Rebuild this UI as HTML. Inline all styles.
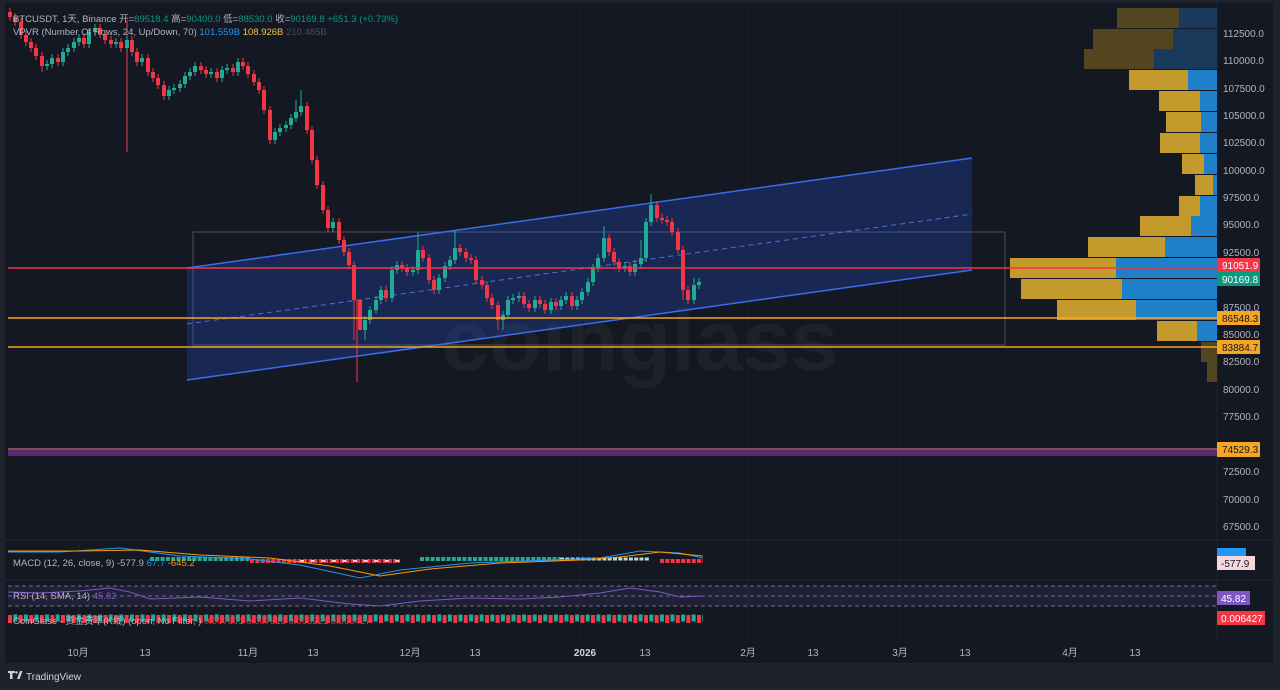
<!DOCTYPE html>
<html><head><meta charset="utf-8">
<style>
html,body{margin:0;padding:0;width:1280px;height:690px;overflow:hidden;background:#1e222d;font-family:"Liberation Sans","Noto Sans CJK SC",sans-serif}
#c{position:absolute;left:0;top:0}
</style></head><body>
<svg id="c" width="1280" height="690" xmlns="http://www.w3.org/2000/svg" font-family="Liberation Sans, Noto Sans CJK SC, sans-serif">
<rect x="0" y="0" width="1280" height="690" fill="#1e222d"/>
<rect x="5" y="3" width="1268" height="660" fill="#141823"/>
<g stroke="#1a1e2b" stroke-width="1">
<line x1="78" y1="3" x2="78" y2="640"/><line x1="248" y1="3" x2="248" y2="640"/><line x1="410" y1="3" x2="410" y2="640"/><line x1="580" y1="3" x2="580" y2="640"/><line x1="748" y1="3" x2="748" y2="640"/><line x1="900" y1="3" x2="900" y2="640"/><line x1="1070" y1="3" x2="1070" y2="640"/>
</g>
<line x1="5" y1="540" x2="1273" y2="540" stroke="#232734"/>
<line x1="5" y1="580" x2="1273" y2="580" stroke="#232734"/>
<line x1="1217" y1="3" x2="1217" y2="640" stroke="#1f2330"/>
<text x="640" y="370" text-anchor="middle" font-size="86" font-weight="bold" fill="#ffffff" fill-opacity="0.04">coinglass</text>
<rect x="193" y="232" width="812" height="113" fill="none" stroke="#4d505b" stroke-width="1"/>
<polygon points="187,268 972,158 972,270 187,380" fill="#2962ff" fill-opacity="0.22"/>
<line x1="187" y1="268" x2="972" y2="158" stroke="#3b6cf0" stroke-width="1.5"/>
<line x1="187" y1="380" x2="972" y2="270" stroke="#3b6cf0" stroke-width="1.5"/>
<line x1="187" y1="324" x2="972" y2="214" stroke="#4a72d8" stroke-width="1" stroke-dasharray="5,4"/>
<!-- volume profile -->
<g>
<rect x="1117" y="8" width="62" height="20" fill="#52451f"/><rect x="1179" y="8" width="38" height="20" fill="#1a3a5c"/>
<rect x="1093" y="29" width="80" height="20" fill="#52451f"/><rect x="1173" y="29" width="44" height="20" fill="#1a3a5c"/>
<rect x="1084" y="49" width="70" height="20" fill="#52451f"/><rect x="1154" y="49" width="63" height="20" fill="#1a3a5c"/>
<rect x="1129" y="70" width="59" height="20" fill="#c49a2c"/><rect x="1188" y="70" width="29" height="20" fill="#1e80c9"/>
<rect x="1159" y="91" width="41" height="20" fill="#c49a2c"/><rect x="1200" y="91" width="17" height="20" fill="#1e80c9"/>
<rect x="1166" y="112" width="35" height="20" fill="#c49a2c"/><rect x="1201" y="112" width="16" height="20" fill="#1e80c9"/>
<rect x="1160" y="133" width="40" height="20" fill="#c49a2c"/><rect x="1200" y="133" width="17" height="20" fill="#1e80c9"/>
<rect x="1182" y="154" width="22" height="20" fill="#c49a2c"/><rect x="1204" y="154" width="13" height="20" fill="#1e80c9"/>
<rect x="1195" y="175" width="18" height="20" fill="#c49a2c"/><rect x="1213" y="175" width="4" height="20" fill="#1e80c9"/>
<rect x="1179" y="196" width="21" height="20" fill="#c49a2c"/><rect x="1200" y="196" width="17" height="20" fill="#1e80c9"/>
<rect x="1140" y="216" width="51" height="20" fill="#c49a2c"/><rect x="1191" y="216" width="26" height="20" fill="#1e80c9"/>
<rect x="1088" y="237" width="77" height="20" fill="#c49a2c"/><rect x="1165" y="237" width="52" height="20" fill="#1e80c9"/>
<rect x="1010" y="258" width="106" height="20" fill="#c49a2c"/><rect x="1116" y="258" width="101" height="20" fill="#1e80c9"/>
<rect x="1021" y="279" width="101" height="20" fill="#c49a2c"/><rect x="1122" y="279" width="95" height="20" fill="#1e80c9"/>
<rect x="1057" y="300" width="79" height="20" fill="#c49a2c"/><rect x="1136" y="300" width="81" height="20" fill="#1e80c9"/>
<rect x="1157" y="321" width="40" height="20" fill="#c49a2c"/><rect x="1197" y="321" width="20" height="20" fill="#1e80c9"/>
<rect x="1201" y="342" width="16" height="20" fill="#52451f"/>
<rect x="1207" y="362" width="10" height="20" fill="#52451f"/>
</g>
<!-- candles -->
<path stroke="#f23645" stroke-width="1" fill="none" d="M10 8V21 M15 13V26 M21 18V39 M26 31V46 M31 38V52 M36 44V60 M42 52V72 M58 54V66 M84 34V48 M100 24V38 M105 30V44 M111 36V48 M121 38V52 M127 20V152 M132 36V56 M137 48V66 M148 54V76 M153 68V82 M158 74V89 M164 81V100 M201 62V74 M206 66V78 M217 68V82 M233 64V76 M243 58V70 M248 62V78 M254 70V86 M259 78V94 M264 86V114 M270 106V144 M307 102V134 M312 126V164 M317 156V189 M323 181V214 M328 206V232 M339 218V244 M344 236V256 M349 248V269 M354 261V340 M357 300V382 M386 286V302 M402 261V272 M407 264V276 M423 246V262 M429 254V284 M434 276V294 M460 244V256 M466 248V262 M471 254V264 M476 256V284 M482 276V289 M487 281V302 M492 294V309 M498 301V330 M524 292V308 M529 300V312 M540 296V308 M545 300V314 M556 298V310 M572 292V310 M609 234V256 M614 248V266 M619 258V272 M630 262V276 M657 201V222 M662 214V224 M667 216V226 M672 218V236 M678 228V254 M683 246V300 M688 286V304"/>
<path fill="#f23645" d="M8 12h4V17h-4z M13 17h4V22h-4z M19 22h4V35h-4z M24 35h4V42h-4z M29 42h4V48h-4z M34 48h4V56h-4z M40 56h4V66h-4z M56 58h4V62h-4z M82 38h4V44h-4z M98 28h4V34h-4z M103 34h4V40h-4z M109 40h4V44h-4z M119 42h4V48h-4z M130 40h4V52h-4z M135 52h4V62h-4z M146 58h4V72h-4z M151 72h4V78h-4z M156 78h4V85h-4z M162 85h4V96h-4z M199 66h4V70h-4z M204 70h4V74h-4z M215 72h4V78h-4z M231 68h4V72h-4z M241 62h4V66h-4z M246 66h4V74h-4z M252 74h4V82h-4z M257 82h4V90h-4z M262 90h4V110h-4z M268 110h4V140h-4z M305 106h4V130h-4z M310 130h4V160h-4z M315 160h4V185h-4z M321 185h4V210h-4z M326 210h4V228h-4z M337 222h4V240h-4z M342 240h4V252h-4z M347 252h4V265h-4z M352 265h4V300h-4z M358 300h4V330h-4z M384 290h4V298h-4z M400 265h4V268h-4z M405 268h4V272h-4z M421 250h4V258h-4z M427 258h4V280h-4z M432 280h4V290h-4z M458 248h4V252h-4z M464 252h4V258h-4z M469 258h4V260h-4z M474 260h4V280h-4z M480 280h4V285h-4z M485 285h4V298h-4z M490 298h4V305h-4z M496 305h4V320h-4z M522 296h4V304h-4z M527 304h4V308h-4z M538 300h4V304h-4z M543 304h4V310h-4z M554 302h4V306h-4z M570 296h4V306h-4z M607 238h4V252h-4z M612 252h4V262h-4z M617 262h4V268h-4z M628 266h4V272h-4z M655 205h4V218h-4z M660 218h4V220h-4z M665 220h4V222h-4z M670 222h4V232h-4z M676 232h4V250h-4z M681 250h4V290h-4z M686 290h4V300h-4z"/>
<path stroke="#22ab94" stroke-width="1" fill="none" d="M47 60V70 M52 54V68 M63 48V66 M68 44V56 M74 38V52 M79 34V46 M89 28V48 M95 24V36 M116 38V48 M127 36V52 M142 54V66 M169 86V100 M174 84V94 M180 80V92 M185 72V88 M190 68V80 M195 62V76 M211 68V78 M222 66V82 M227 64V74 M238 58V76 M275 128V144 M280 124V136 M286 121V132 M291 114V129 M296 100V122 M301 90V116 M333 218V232 M365 316V340 M370 306V324 M376 296V314 M381 286V304 M392 266V302 M397 261V274 M413 266V276 M418 232V274 M439 274V294 M445 262V282 M450 256V270 M455 230V264 M503 311V330 M508 296V319 M513 294V304 M519 292V302 M535 296V312 M551 298V314 M561 296V310 M566 292V304 M577 296V310 M582 288V304 M588 278V296 M593 264V286 M598 254V272 M604 226V262 M625 262V272 M635 260V276 M641 240V268 M646 218V262 M651 194V226 M694 278V304 M699 278V289"/>
<path fill="#22ab94" d="M45 64h4V66h-4z M50 58h4V64h-4z M61 52h4V62h-4z M66 48h4V52h-4z M72 42h4V48h-4z M77 38h4V42h-4z M87 32h4V44h-4z M93 28h4V32h-4z M114 42h4V44h-4z M125 40h4V48h-4z M140 58h4V62h-4z M167 90h4V96h-4z M172 88h4V90h-4z M178 84h4V88h-4z M183 76h4V84h-4z M188 72h4V76h-4z M193 66h4V72h-4z M209 72h4V74h-4z M220 70h4V78h-4z M225 68h4V70h-4z M236 62h4V72h-4z M273 132h4V140h-4z M278 128h4V132h-4z M284 125h4V128h-4z M289 118h4V125h-4z M294 112h4V118h-4z M299 106h4V112h-4z M331 222h4V228h-4z M363 320h4V330h-4z M368 310h4V320h-4z M374 300h4V310h-4z M379 290h4V300h-4z M390 270h4V298h-4z M395 265h4V270h-4z M411 270h4V272h-4z M416 250h4V270h-4z M437 278h4V290h-4z M443 266h4V278h-4z M448 260h4V266h-4z M453 248h4V260h-4z M501 315h4V320h-4z M506 300h4V315h-4z M511 298h4V300h-4z M517 296h4V298h-4z M533 300h4V308h-4z M549 302h4V310h-4z M559 300h4V306h-4z M564 296h4V300h-4z M575 300h4V306h-4z M580 292h4V300h-4z M586 282h4V292h-4z M591 268h4V282h-4z M596 258h4V268h-4z M602 238h4V258h-4z M623 266h4V268h-4z M633 264h4V272h-4z M639 258h4V264h-4z M644 222h4V258h-4z M649 205h4V222h-4z M692 285h4V300h-4z M697 282h4V285h-4z"/>
<!-- horizontal lines -->
<line x1="8" y1="268" x2="1217" y2="268" stroke="#f23645" stroke-width="1.5"/>
<line x1="8" y1="318" x2="1217" y2="318" stroke="#f5a623" stroke-width="1.5"/>
<line x1="8" y1="347" x2="1217" y2="347" stroke="#f5a623" stroke-width="1.5"/>
<rect x="8" y="450" width="1209" height="6" fill="#5b2a6e"/>
<line x1="8" y1="449" x2="1217" y2="449" stroke="#e08a8a" stroke-width="1"/>
<!-- MACD -->
<line x1="150" y1="559" x2="250" y2="559" stroke="#22ab94" stroke-width="4" stroke-dasharray="4 1.3"/>
<line x1="250" y1="561" x2="400" y2="561" stroke="#f23645" stroke-width="4" stroke-dasharray="4 1.3"/>
<line x1="300" y1="561" x2="400" y2="561" stroke="#ffcdd2" stroke-width="2" stroke-dasharray="4 6.6"/>
<line x1="420" y1="559" x2="560" y2="559" stroke="#22ab94" stroke-width="4" stroke-dasharray="4 1.3"/>
<line x1="560" y1="559" x2="650" y2="559" stroke="#b2dfdb" stroke-width="3" stroke-dasharray="4 1.3"/>
<line x1="660" y1="561" x2="703" y2="561" stroke="#f23645" stroke-width="4" stroke-dasharray="4 1.3"/>
<path fill="none" stroke="#2196f3" stroke-width="1" d="M8 552 L60 552 L120 548 L180 556 L250 559 L300 565 L360 578 L400 570 L470 563 L550 560 L600 558 L640 551 L680 553 L703 558"/>
<path fill="none" stroke="#ff9800" stroke-width="1" d="M8 551 L80 551 L140 550 L200 555 L270 558 L330 566 L380 576 L430 569 L500 563 L580 560 L620 557 L660 552 L703 556"/>
<!-- RSI -->
<rect x="8" y="586" width="1209" height="20" fill="#7e57c2" fill-opacity="0.12"/>
<line x1="8" y1="586" x2="1217" y2="586" stroke="#6b6f80" stroke-dasharray="4,3"/>
<line x1="8" y1="596" x2="1217" y2="596" stroke="#6b6f80" stroke-dasharray="4,3"/>
<line x1="8" y1="606" x2="1217" y2="606" stroke="#6b6f80" stroke-dasharray="4,3"/>
<path fill="none" stroke="#7e57c2" stroke-width="1" d="M8 592 L40 593 L80 591 L110 588 L130 592 L150 599 L200 597 L250 601 L300 598 L350 604 L380 606 L420 601 L470 598 L520 599 L560 597 L600 593 L630 588 L660 592 L680 597 L703 596"/>
<!-- funding -->
<line x1="8" y1="619" x2="703" y2="619" stroke="#f23645" stroke-width="8" stroke-dasharray="4 6.6"/>
<line x1="13.3" y1="618" x2="703" y2="618" stroke="#22ab94" stroke-width="7" stroke-dasharray="4 6.6"/>
<!-- price axis -->
<g font-size="10" fill="#b2b5be">
<text x="1223" y="37">112500.0</text><text x="1223" y="64">110000.0</text><text x="1223" y="92">107500.0</text><text x="1223" y="119">105000.0</text><text x="1223" y="146">102500.0</text><text x="1223" y="174">100000.0</text><text x="1223" y="201">97500.0</text><text x="1223" y="228">95000.0</text><text x="1223" y="256">92500.0</text><text x="1223" y="311">87500.0</text><text x="1223" y="338">85000.0</text><text x="1223" y="365">82500.0</text><text x="1223" y="393">80000.0</text><text x="1223" y="420">77500.0</text><text x="1223" y="475">72500.0</text><text x="1223" y="503">70000.0</text><text x="1223" y="530">67500.0</text>
</g>
<g font-size="10">
<rect x="1217" y="258" width="43" height="14" fill="#f23645"/><text x="1222" y="269" fill="#fff">91051.9</text>
<rect x="1217" y="272" width="43" height="14" fill="#089981"/><text x="1222" y="283" fill="#fff">90169.8</text>
<rect x="1217" y="311" width="43" height="14" fill="#f5a623"/><text x="1222" y="322" fill="#131722">86548.3</text>
<rect x="1217" y="340" width="43" height="14" fill="#f5a623"/><text x="1222" y="351" fill="#131722">83884.7</text>
<rect x="1217" y="442" width="43" height="15" fill="#f5a623"/><text x="1222" y="453" fill="#131722">74529.3</text>
<rect x="1217" y="548" width="29" height="8" fill="#2196f3"/>
<rect x="1217" y="556" width="38" height="14" fill="#f8d7da"/><text x="1221" y="567" fill="#131722">-577.9</text>
<rect x="1217" y="591" width="33" height="14" fill="#7e57c2"/><text x="1221" y="602" fill="#fff">45.82</text>
<rect x="1217" y="611" width="48" height="14" fill="#f23645"/><text x="1221" y="622" fill="#fff">0.006427</text>
</g>
<g font-size="10" fill="#b2b5be" text-anchor="middle">
<text x="78" y="656">10月</text><text x="145" y="656">13</text><text x="248" y="656">11月</text><text x="313" y="656">13</text><text x="410" y="656">12月</text><text x="475" y="656">13</text><text x="585" y="656" font-weight="bold" fill="#d1d4dc">2026</text><text x="645" y="656">13</text><text x="748" y="656">2月</text><text x="813" y="656">13</text><text x="900" y="656">3月</text><text x="965" y="656">13</text><text x="1070" y="656">4月</text><text x="1135" y="656">13</text>
</g>
<g font-size="9.5">
<text x="13" y="22" fill="#b2b5be">BTCUSDT, 1天, Binance  开=<tspan fill="#089981">89518.4</tspan>  高=<tspan fill="#089981">90400.0</tspan>  低=<tspan fill="#089981">88530.0</tspan>  收=<tspan fill="#089981">90169.8</tspan>  <tspan fill="#089981">+651.3 (+0.73%)</tspan></text>
<text x="13" y="35" fill="#b2b5be">VPVR (Number Of Rows, 24, Up/Down, 70)  <tspan fill="#2196f3">101.559B</tspan>  <tspan fill="#f5c542">108.926B</tspan>  <tspan fill="#4a4e5a">210.485B</tspan></text>
<text x="13" y="566" fill="#b2b5be">MACD (12, 26, close, 9)  -577.9  <tspan fill="#2196f3">67.7</tspan>  <tspan fill="#ff9800">-645.2</tspan></text>
<text x="13" y="599" fill="#b2b5be">RSI (14, SMA, 14)  <tspan fill="#7e57c2">45.82</tspan></text>
<text x="13" y="624" fill="#b2b5be">CoinGlass - 资金费率(K线) (open, No Filter, )  <tspan fill="#f23645">0.007801  0.007813  0.006221  0.006427</tspan></text>
</g>
<g fill="#d1d4dc"><path d="M8 671h7v2h-2.5v6h-2.5v-6H8z"/><circle cx="16.5" cy="672.5" r="1.2"/><path d="M17 679l3-8h2.5l-3 8z"/></g>
<text x="26" y="680" font-size="10" fill="#d1d4dc">TradingView</text>
</svg>
</body></html>
